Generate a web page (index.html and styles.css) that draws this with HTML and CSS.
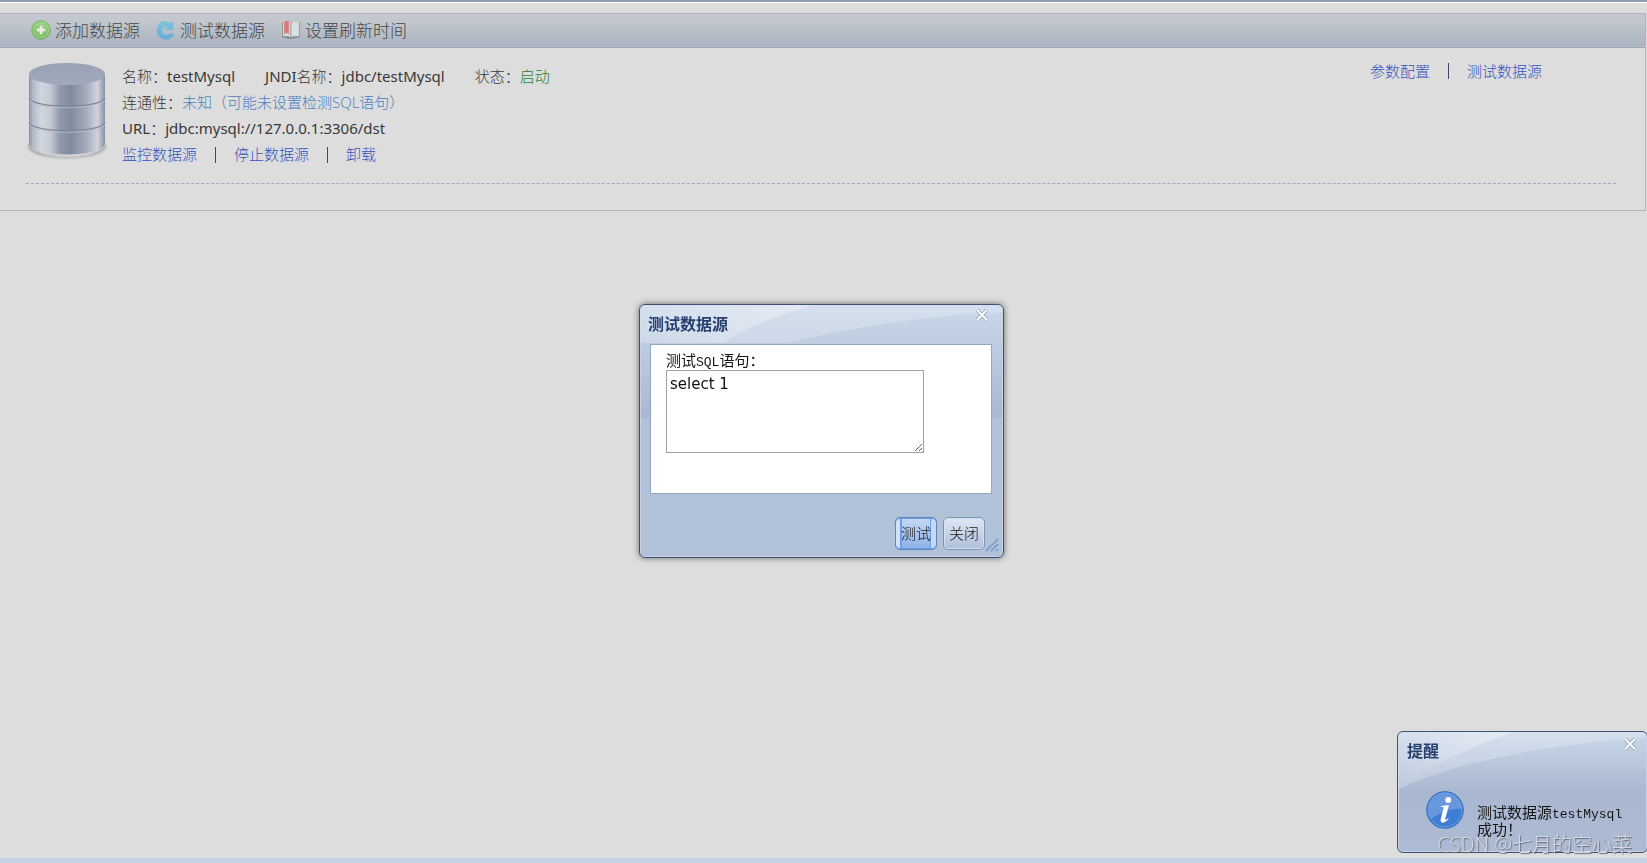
FILE: index.html
```html
<!DOCTYPE html>
<html lang="zh-CN">
<head>
<meta charset="utf-8">
<title>数据源管理</title>
<link rel="stylesheet" href="styles.css">
</head>
<body>
<main class="page">
  <section class="panel">
    <nav class="toolbar">
      <button class="tool" type="button">
        <svg class="tool-icon" viewBox="0 0 20 20"><defs><radialGradient id="green" cx=".5" cy=".3" r=".7"><stop offset="0" stop-color="#a5d98b"/><stop offset="1" stop-color="#72b85b"/></radialGradient></defs><circle cx="10" cy="10" r="9.3" fill="url(#green)" stroke="#75b060" stroke-width=".8"/><circle cx="10" cy="10" r="7.6" fill="none" stroke="#a9d998" stroke-width=".8"/><path d="M8.3 5.4h3.4v2.9h2.9v3.4h-2.9v2.9H8.3v-2.9H5.4V8.3h2.9z" fill="#e4efdf" stroke="#82b875" stroke-width=".5"/></svg>
        添加数据源
      </button>
      <button class="tool" type="button">
        <svg class="tool-icon" viewBox="0 0 20 20"><defs><linearGradient id="blue" x2="0" y2="1"><stop stop-color="#80c5dc"/><stop offset="1" stop-color="#64aad6"/></linearGradient></defs><path d="M17 1.300v8.400H8.800l3-2.900C9 5.500 6.300 7.600 6.300 10.700c0 4.500 5.200 5.700 8.300 2.300l3.500 1.700C13.500 22.500 1 20 1 10.500 1 2.500 8.500-1 14.300 3.500z" fill="url(#blue)" stroke="#78b9d3" stroke-width=".6"/></svg>
        测试数据源
      </button>
      <button class="tool" type="button">
        <svg class="tool-icon" viewBox="0 0 20 20"><path d="M1 2v15.200l8.800 1.700 9.200-1.700V2z" fill="#82878d"/><path d="M1.800 1.200h5.700L10 2.700v14.800l-2.500-1.300H1.800z" fill="#d5d7d8"/><path d="M10 2.700l2.500-1.500h5.700v15h-5.700L10 17.500z" fill="#dde0e0" stroke="#a8adb0" stroke-width=".5"/><path d="M3.200 1h4.600v13.500l-2.300-2-2.300 2z" fill="#dc7575"/><path d="M9.800 3v14" stroke="#999da1" stroke-width=".8"/></svg>
        设置刷新时间
      </button>
    </nav>
    <div class="source">
      <svg class="database" viewBox="1 0 84 98">
        <defs>
          <linearGradient id="metal"><stop stop-color="#8992a7"/><stop offset=".05" stop-color="#b2b9c9"/><stop offset=".16" stop-color="#d3d6df"/><stop offset=".28" stop-color="#c6cad4"/><stop offset=".4" stop-color="#929bae"/><stop offset=".55" stop-color="#7f8a9e"/><stop offset=".76" stop-color="#a5aebd"/><stop offset=".9" stop-color="#d1d4dc"/><stop offset=".97" stop-color="#9da5b5"/><stop offset="1" stop-color="#8790a4"/></linearGradient>
          <linearGradient id="lid" x2="0" y2="1"><stop stop-color="#99a2b3"/><stop offset="1" stop-color="#a1aabc"/></linearGradient>
          <filter id="soft"><feGaussianBlur stdDeviation="1.200"/></filter>
        </defs>
        <path d="M3 80c1 20 78 20 78 0v4c-3 16-75 16-78 0z" fill="#85898f" filter="url(#soft)"/>
        <path d="M4 13h76v69c-3 14-73 14-76 0z" fill="url(#metal)"/>
        <ellipse cx="42" cy="12" rx="38" ry="11" fill="url(#lid)"/>
        <path d="M4 36c4 11 72 11 76 0M4 60.500c4 11 72 11 76 0" fill="none" stroke="#7f899d" stroke-width="1.300"/>
        <path d="M4 37.500c4 11 72 11 76 0M4 62c4 11 72 11 76 0" fill="none" stroke="#b9bfcc" stroke-width=".8"/>
      </svg>
      <div class="details">
        <p class="facts"><span>名称：<span class="value">testMysql</span></span><span><span class="value">JNDI</span>名称：<span class="value">jdbc/testMysql</span></span><span>状态：<span class="running">启动</span></span></p>
        <p>连通性：<span class="unknown">未知（可能未设置检测SQL语句）</span></p>
        <p><span class="value">URL</span>：<span class="value">jdbc:mysql://127.0.0.1:3306/dst</span></p>
        <p class="links"><a href="#">监控数据源</a><span class="bar"></span><a href="#">停止数据源</a><span class="bar"></span><a href="#">卸载</a></p>
      </div>
      <p class="links actions"><a href="#">参数配置</a><span class="bar"></span><a href="#">测试数据源</a></p>
    </div>
  </section>
</main>
<footer class="status"></footer>

<div class="overlay">
  <section class="dialog" role="dialog" aria-labelledby="dialog-title">
    <svg class="gloss" viewBox="0 0 364 38" preserveAspectRatio="none"><defs><linearGradient id="shine"><stop stop-color="#fff" stop-opacity="0"/><stop offset="1" stop-color="#fff" stop-opacity=".38"/></linearGradient></defs><path d="M0 0h364v7C285 11 205 23 150 38H0z" fill="#fff" opacity=".22"/><path d="M0 0h174Q124 13 82 38H0z" fill="url(#shine)"/></svg>
    <header class="title-row"><h2 class="title" id="dialog-title">测试数据源</h2>
      <button class="close" type="button" aria-label="关闭窗口"><svg viewBox="0 0 14 14"><path d="M2 2l10 10M12 2L2 12" stroke="#8d9db9" stroke-width="3.400"/><path d="M2 2l10 10M12 2L2 12" stroke="#fff" stroke-width="2"/></svg></button></header>
    <div class="content">
      <label for="sql">测试<span class="latin">SQL</span>语句：</label>
      <textarea class="query" id="sql" spellcheck="false">select 1</textarea>
    </div>
    <div class="buttons"><button class="button primary" type="button">测试</button><button class="button" type="button">关闭</button></div>
    <svg class="grip" viewBox="0 0 14 14"><path d="M1 13L13 1M6 13l7-7M11 13l2-2" stroke="#6f98cc" stroke-width="1.500"/></svg>
  </section>
</div>

<aside class="toast" role="status">
  <svg class="toast-gloss" viewBox="0 0 250 60" preserveAspectRatio="none"><path d="M0 0h250v5C160 12 55 29 0 58z" fill="#fff" opacity=".22"/><path d="M0 0h115Q55 20 0 56z" fill="url(#shine)"/></svg>
  <header class="title-row"><h2 class="title">提醒</h2>
    <button class="close" type="button" aria-label="关闭提醒"><svg viewBox="0 0 14 14"><path d="M2 2l10 10M12 2L2 12" stroke="#8d9db9" stroke-width="3.400"/><path d="M2 2l10 10M12 2L2 12" stroke="#fff" stroke-width="2"/></svg></button></header>
  <div class="message">
    <svg class="info" viewBox="0 0 38 38"><circle cx="19" cy="19" r="18.300" fill="#3e7dd5" stroke="#316bb7"/><path d="M2 19a17 17 0 0 1 34-1C25 17 15 21 5 28Q2 24 2 19z" fill="#6798dd"/><circle cx="19" cy="19" r="17" fill="none" stroke="#6f9fe2" stroke-width=".9"/><circle cx="22.200" cy="9" r="3" fill="#fff"/><path d="M15 15l8-1-3.800 14c-.3 1.300.8 1 2.800-.7l.7.800c-4.500 5-9.200 4.600-8 0L17.600 17c.2-.8-.8-1-2.600-.9z" fill="#fff"/></svg>
    <p class="note">测试数据源<span class="latin">testMysql</span><br>成功！</p>
  </div>
</aside>
<span class="watermark">CSDN @七月的空心菜</span>
</body>
</html>
```
FILE: styles.css
```css
* { box-sizing: border-box; }
body {
  margin: 0;
  min-height: 100vh;
  display: flex;
  flex-direction: column;
  background: #ddd;
  color: #383838;
  font: 300 15px/25px "Open Sans", "Noto Sans CJK SC", sans-serif;
  border-top: 2px solid #929db1;
}
p, h2 { margin: 0; }
button { font: inherit; color: inherit; }
svg { display: block; }
.page { flex: 1; padding: 10px 1px 0 0; border-top: 1px solid #fff; }
.panel { border: 1px solid #afb5c0; border-left: 0; }
.toolbar {
  display: flex;
  gap: 12px;
  height: 34px;
  padding: 0 29px 1px;
  align-items: center;
  background: linear-gradient(#c3c8d2, #c3c8ce 20%, #a9b3c0);
  border-bottom: 1px solid #9ba5b5;
  box-shadow: inset 0 -1px #b6bfca;
}
.tool {
  display: flex;
  align-items: center;
  gap: 4px;
  padding: 0 2px;
  border: 0;
  background: none;
  color: #44474c;
  font-size: 17px;
}
.tool-icon { width: 20px; height: 20px; }
.source {
  display: flex;
  margin: 0 29px 26px 26px;
  padding: 14px 0 16px;
  border-bottom: 1px dashed #a3a9b8;
}
.database { width: 84px; height: 98px; margin-right: 12px; }
.details { padding-top: 2px; display: grid; gap: 1px; align-content: start; }
.facts { display: flex; gap: 30px; }
.value { font-family: "Noto Sans", sans-serif; font-weight: 400; line-height: 0; }
.running { color: #2b8030; }
.unknown { color: #4c7dc0; }
.links { display: flex; align-items: center; gap: 18px; }
.links a { color: #3454bc; text-decoration: none; }
.bar { width: 1px; height: 16px; background: #4c4068; }
.actions { margin-left: auto; margin-right: 74px; height: 18px; }
.status { height: 5px; background: #c7d2e2; }
.overlay {
  position: fixed;
  inset: 0;
  display: flex;
  align-items: center;
  justify-content: center;
  font-weight: 400;
}
.dialog, .toast {
  border: 1px solid #405273;
  border-radius: 6px;
  color: #151515;
  overflow: hidden;
}
.dialog {
  position: relative;
  width: 365px;
  margin: 0 4px 2px 0;
  padding: 0 11px 7px 10px;
  background: linear-gradient(#cad8ea, #a9b8d0 113px, #b1c1d8 113px);
  box-shadow: 0 0 6px #666, inset 0 0 0 1px #c7d3e5;
}
.gloss, .toast-gloss { position: absolute; top: 0; left: 0; width: 100%; }
.gloss { height: 38px; }
.toast-gloss { height: 60px; }
.title-row { position: relative; display: flex; justify-content: space-between; height: 38px; }
.title { padding-top: 6px; color: #27406f; font: 700 16px/25px "Noto Sans CJK SC", sans-serif; }
.close { align-self: flex-start; padding: 0; border: 0; background: none; }
.close svg { width: 14px; height: 14px; }
.dialog .title-row { height: 39px; margin-left: -2px; }
.dialog .close { margin: 3px 3px 0; }
.content {
  position: relative;
  height: 150px;
  padding: 6px 15px;
  background: #fff;
  border: 1px solid #91a7c7;
}
.content label { display: block; height: 19px; line-height: 19px; }
.latin { font-family: "Liberation Mono", monospace; font-size: 13px; line-height: 0; }
.query {
  display: block;
  width: 258px;
  height: 83px;
  padding: 3px;
  border: 1px solid #a1a1a1;
  background: #fff;
  color: #111;
  font: 15px/20px "DejaVu Sans", sans-serif;
}
.buttons { display: flex; justify-content: flex-end; gap: 6px; padding: 23px 7px 0 0; }
.button {
  width: 42px;
  height: 33px;
  padding: 0;
  border: 1px solid #8194b3;
  border-radius: 5px;
  background: linear-gradient(#dfe7f4, #afbfd9);
  box-shadow: inset 0 0 0 1px #d4dfef;
  font-weight: 300;
}
.primary {
  border-color: #6483b4;
  background: linear-gradient(90deg, #d4e2f8 4px, #69a0f2 4px, #69a0f2 6px, transparent 6px, transparent 34px, #69a0f2 34px, #69a0f2 35px, #c7daf5 35px), linear-gradient(#c5d8f4, #8db1e7);
  box-shadow: inset 0 1px #69a0f2, inset 0 -1px #69a0f2;
}
.grip { position: absolute; right: 4px; bottom: 5px; width: 14px; height: 14px; }
.toast {
  position: fixed;
  right: -1px;
  bottom: 10px;
  width: 251px;
  height: 122px;
  padding: 0 10px 0 9px;
  background: linear-gradient(#cad8ea, #a9b8d0 60px, #acbbd3);
  box-shadow: inset 0 0 0 1px #c7d3e5;
  font-weight: 400;
}
.toast .close { margin: 5px 0 0; }
.message { display: flex; gap: 13px; padding: 21px 0 0 19px; }
.info { width: 38px; height: 38px; flex: none; }
.note { padding-top: 13px; line-height: 17px; white-space: nowrap; }
.watermark {
  position: fixed;
  right: 15px;
  bottom: 5px;
  color: #d5dae2;
  font-size: 20px;
  line-height: 26px;
  text-shadow: 1px 1px 1px #626b7b;
  white-space: nowrap;
}
```
